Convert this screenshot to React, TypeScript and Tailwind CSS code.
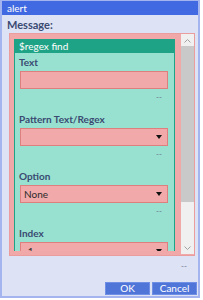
import React from 'react';

const font = { fontFamily: 'Lato, "Open Sans", sans-serif' };

const Dash = ({ className = '' }: { className?: string }) => (
  <div className={`flex justify-end text-[8px] leading-[10px] text-[#6b6f8f] ${className}`}>--</div>
);

const Arrow = () => (
  <svg width="6" height="4" viewBox="0 0 6 4" className="shrink-0">
    <path d="M0 0h6L3 4z" fill="#111" />
  </svg>
);

const Field = ({ label, select, value }: { label: string; select?: boolean; value?: string }) => (
  <div className="flex flex-col">
    <div className="h-[13px] text-[10px] font-bold leading-[13px] text-[#3a4a72]">{label}</div>
    <div className="ml-[1px] mt-[2px] flex h-[18px] items-center justify-between border border-[#de7f7f] bg-[#f1a9a9] pl-[3px] pr-[5px] text-[10px] text-[#2b2b2b]">
      <span>{value}</span>
      {select && <Arrow />}
    </div>
    <Dash className="h-[15px] items-center pr-[6px] pt-[1px]" />
    <div className="h-[9px]" />
  </div>
);

const Chevron = ({ up }: { up?: boolean }) => (
  <svg width="7" height="5" viewBox="0 0 7 5">
    <path d={up ? 'M0.5 4.5L3.5 1.5L6.5 4.5' : 'M0.5 0.5L3.5 3.5L6.5 0.5'} stroke="#a2a2a2" strokeWidth="1" fill="none" />
  </svg>
);

export default function App() {
  return (
    <div className="h-[300px] w-[203px] bg-white" style={font}>
      <div className="flex h-[298px] w-[200px] flex-col border-2 border-t border-[#a4b4ee] bg-[#dde2f5]">
        <div className="h-[14px] bg-[#4169e1] pl-[5px] text-[10px] leading-[14px] text-white">alert</div>
        <div className="h-[18px] pl-[5px] pt-[3px] text-[11px] font-bold leading-[14px] text-[#3a4a72]">Message:</div>

        {/* scroll box */}
        <div className="ml-[7px] mr-[3px] flex h-[223px] border border-[#eb9c9c] bg-[#f1a8a8]">
          <div className="flex-1 pb-[4px] pl-[4px] pr-[6px] pt-[5px]">
            <div className="h-full overflow-hidden">
              <div className="border border-[#1fa386] bg-[#98e1d0]">
                <div className="h-[13px] bg-[#1fa386] pl-[4px] text-[10px] leading-[13px] text-white">$regex find</div>
                <div className="pl-[4px] pr-[6px] pt-[3px]">
                  <Field label="Text" />
                  <Field label="Pattern Text/Regex" select />
                  <Field label="Option" select value="None" />
                  <Field label="Index" select value="-1" />
                </div>
              </div>
            </div>
          </div>
          <div className="mb-[1px] flex w-[13px] flex-col bg-[#f0f0f0]">
            <div className="flex h-[12px] items-center justify-center">
              <Chevron up />
            </div>
            <div className="h-[156px] bg-[#c9c9c9]" />
            <div className="flex-1" />
            <div className="flex h-[12px] items-center justify-center">
              <Chevron />
            </div>
          </div>
        </div>

        <Dash className="mr-[11px] mt-[5px] h-[10px]" />
        <div className="mr-[1px] mt-[11px] flex justify-end gap-[2px]">
          <button className="h-[13px] w-[45px] border border-[#6f8fe4] bg-[#4f75d9] text-[10px] leading-[11px] text-white">OK</button>
          <button className="h-[13px] w-[45px] border border-[#6f8fe4] bg-[#4f75d9] text-[10px] leading-[11px] text-white">Cancel</button>
        </div>
      </div>
    </div>
  );
}
